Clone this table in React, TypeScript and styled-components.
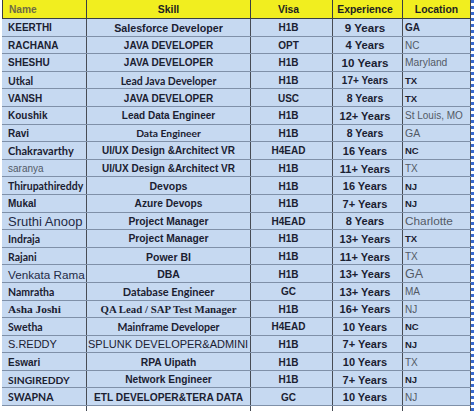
import styled, { createGlobalStyle } from 'styled-components';

const GlobalStyle = createGlobalStyle`
  html, body {
    margin: 0;
    padding: 0;
    background: #ffffff;
  }
  body {
    width: 474px;
    height: 411px;
    overflow: hidden;
  }
`;

type Face = 'arial' | 'calibri' | 'times';
type Align = 'left' | 'center';

type CellSpec = {
  text: string;
  face?: Face;
  size?: number;
  bold?: boolean;
  tone?: 'ink' | 'navy' | 'muted';
  align?: Align;
  pad?: number;
};

const FACES: Record<Face, string> = {
  arial: '"Liberation Sans", Arial, sans-serif',
  calibri: 'Lato, "Noto Sans", sans-serif',
  times: '"Liberation Serif", "Times New Roman", serif',
};

const TONES = {
  ink: '#1b2131',
  navy: '#1f2a45',
  muted: '#535966',
};

const COLUMNS = '85px 164px 82px 70px 68px';

// default layout per column: name, skill, visa, experience, location
const COLUMN_LAYOUT: { align: Align; padL: number; padR: number }[] = [
  { align: 'left', padL: 6, padR: 0 },
  { align: 'center', padL: 0, padR: 0 },
  { align: 'center', padL: 0, padR: 6 },
  { align: 'center', padL: 0, padR: 5 },
  { align: 'left', padL: 2, padR: 0 },
];

const b = (text: string, size = 10, face: Face = 'arial'): CellSpec => ({ text, size, face, bold: true });
const r = (text: string, size = 10, face: Face = 'arial'): CellSpec => ({ text, size, face, tone: 'muted' });
const visa = (text: string) => b(text, 10);
const years = (text: string, size = 11) => b(text, size);

const ROWS: CellSpec[][] = [
  [b('KEERTHI'), b('Salesforce Developer', 10.7), visa('H1B'), years('9 Years', 11.6), b('GA')],
  [b('RACHANA'), b('JAVA DEVELOPER', 10), visa('OPT'), years('4 Years', 11.2), r('NC')],
  [b('SHESHU'), b('JAVA DEVELOPER', 10), visa('H1B'), years('10 Years', 11.6), r('Maryland', 10.3)],
  [b('Utkal', 10.5, 'calibri'), b('Lead Java Developer', 10.5, 'calibri'), visa('H1B'), years('17+ Years', 10), b('TX', 9.5)],
  [b('VANSH'), b('JAVA DEVELOPER', 10), visa('USC'), years('8 Years', 10.5), b('TX', 9.5)],
  [b('Koushik', 10), b('Lead Data Engineer', 10), visa('H1B'), years('12+ Years'), r('St Louis, MO')],
  [b('Ravi'), b('Data Engineer', 10.3, 'calibri'), visa('H1B'), years('8 Years', 10.5), r('GA', 10.5)],
  [b('Chakravarthy', 11, 'calibri'), b('UI/UX Design &Architect VR'), visa('H4EAD'), years('16 Years'), b('NC', 9.5)],
  [r('saranya'), b('UI/UX Design &Architect VR'), visa('H1B'), years('11+ Years'), r('TX')],
  [b('Thirupathireddy', 10.5, 'calibri'), b('Devops', 10.5), visa('H1B'), years('16 Years'), b('NJ', 9.5)],
  [b('Mukal'), b('Azure Devops', 10.2), visa('H1B'), years('7+ Years'), b('NJ', 9.5)],
  [
    { text: 'Sruthi Anoop', size: 13, tone: 'navy' },
    b('Project Manager', 10.3),
    visa('H4EAD'),
    years('8 Years'),
    r('Charlotte', 11.8),
  ],
  [b('Indraja', 10.5, 'calibri'), b('Project Manager', 10.3), visa('H1B'), years('13+ Years'), b('TX', 9.5)],
  [b('Rajani', 10.5, 'calibri'), b('Power BI', 10.5), visa('H1B'), years('11+ Years'), r('TX')],
  [
    { text: 'Venkata Rama', size: 11.7, tone: 'navy' },
    b('DBA', 10.5),
    visa('H1B'),
    years('13+ Years'),
    r('GA', 12.5),
  ],
  [b('Namratha', 10.5, 'calibri'), b('Database Engineer', 11, 'calibri'), visa('GC'), years('13+ Years'), r('MA')],
  [b('Asha Joshi', 11.4, 'times'), b('QA Lead / SAP Test Manager', 10.8, 'times'), visa('H1B'), years('16+ Years'), r('NJ')],
  [b('Swetha', 10.5, 'calibri'), b('Mainframe Developer', 10.5, 'calibri'), visa('H4EAD'), years('10 Years'), b('NC', 9.5)],
  [
    { text: 'S.REDDY', size: 11, tone: 'ink' },
    { text: 'SPLUNK DEVELOPER&ADMINI', size: 11, tone: 'ink', align: 'left', pad: 1 },
    visa('H1B'),
    years('7+ Years'),
    b('NJ', 9.5),
  ],
  [b('Eswari'), b('RPA Uipath', 10.3), visa('H1B'), years('10 Years'), r('TX')],
  [b('SINGIREDDY', 10.3, 'calibri'), b('Network Engineer', 10.2), visa('H1B'), years('7+ Years'), b('NJ', 9.5)],
  [b('SWAPNA', 10.5, 'calibri'), b('ETL DEVELOPER&TERA DATA', 10.2), visa('GC'), years('10 Years'), r('NJ')],
];

const HEADERS = ['Name', 'Skill', 'Visa', 'Experience', 'Location'];

const Sheet = styled.div`
  margin-left: 2px;
  width: 469px;
  border-right: 3px dotted #3a6bd0;
  display: flex;
  flex-direction: column;
`;

const HeaderRow = styled.div`
  display: grid;
  grid-template-columns: ${COLUMNS};
  height: 19px;
  box-sizing: border-box;
  background: #f1ee1f;
  border-bottom: 1px solid #3a3d44;
`;

const HeadCell = styled.div<{ $first: boolean; $padR: number }>`
  display: flex;
  align-items: center;
  justify-content: ${(p) => (p.$first ? 'flex-start' : 'center')};
  padding-left: ${(p) => (p.$first ? 6 : 0)}px;
  padding-right: ${(p) => p.$padR}px;
  border-right: 1px solid #3a3d44;
  border-left: ${(p) => (p.$first ? '1px solid #3a3d44' : 'none')};
  font-family: "Liberation Sans", Arial, sans-serif;
  font-weight: 700;
  font-size: ${(p) => (p.$first ? 10.2 : 10.4)}px;
  color: ${(p) => (p.$first ? '#6f6d44' : '#1e1f22')};
`;

const Row = styled.div`
  display: grid;
  grid-template-columns: ${COLUMNS};
  height: 17.6px;
  box-sizing: border-box;
  background: #c6d9f1;
  border-bottom: 1px solid #7f90a8;
`;

const Cell = styled.div<{
  $align: Align;
  $padL: number;
  $padR: number;
  $face: Face;
  $size: number;
  $bold: boolean;
  $tone: keyof typeof TONES;
}>`
  display: flex;
  align-items: center;
  justify-content: ${(p) => (p.$align === 'center' ? 'center' : 'flex-start')};
  padding-left: ${(p) => p.$padL}px;
  padding-right: ${(p) => p.$padR}px;
  padding-top: 1px;
  min-width: 0;
  overflow: hidden;
  white-space: nowrap;
  border-right: 1px solid #474c55;
  font-family: ${(p) => FACES[p.$face]};
  font-size: ${(p) => p.$size}px;
  font-weight: ${(p) => (p.$bold ? 700 : 400)};
  color: ${(p) => TONES[p.$tone]};
`;

const Tail = styled.div`
  display: grid;
  grid-template-columns: ${COLUMNS};
  height: 5px;
  background: #ffffff;
`;

const TailCell = styled.div`
  border-right: 1px solid #474c55;
`;

export default function App() {
  return (
    <>
      <GlobalStyle />
      <Sheet>
        <HeaderRow>
          {HEADERS.map((h, i) => (
            <HeadCell key={h} $first={i === 0} $padR={COLUMN_LAYOUT[i].padR}>
              {h}
            </HeadCell>
          ))}
        </HeaderRow>
        {ROWS.map((row, ri) => (
          <Row key={ri}>
            {row.map((c, ci) => {
              const col = COLUMN_LAYOUT[ci];
              const align = c.align ?? col.align;
              return (
                <Cell
                  key={ci}
                  $align={align}
                  $padL={c.pad ?? col.padL}
                  $padR={c.align ? 0 : col.padR}
                  $face={c.face ?? 'arial'}
                  $size={c.size ?? 10}
                  $bold={!!c.bold}
                  $tone={c.tone ?? 'ink'}
                >
                  {c.text}
                </Cell>
              );
            })}
          </Row>
        ))}
        <Tail>
          {HEADERS.map((h) => (
            <TailCell key={h} />
          ))}
        </Tail>
      </Sheet>
    </>
  );
}
